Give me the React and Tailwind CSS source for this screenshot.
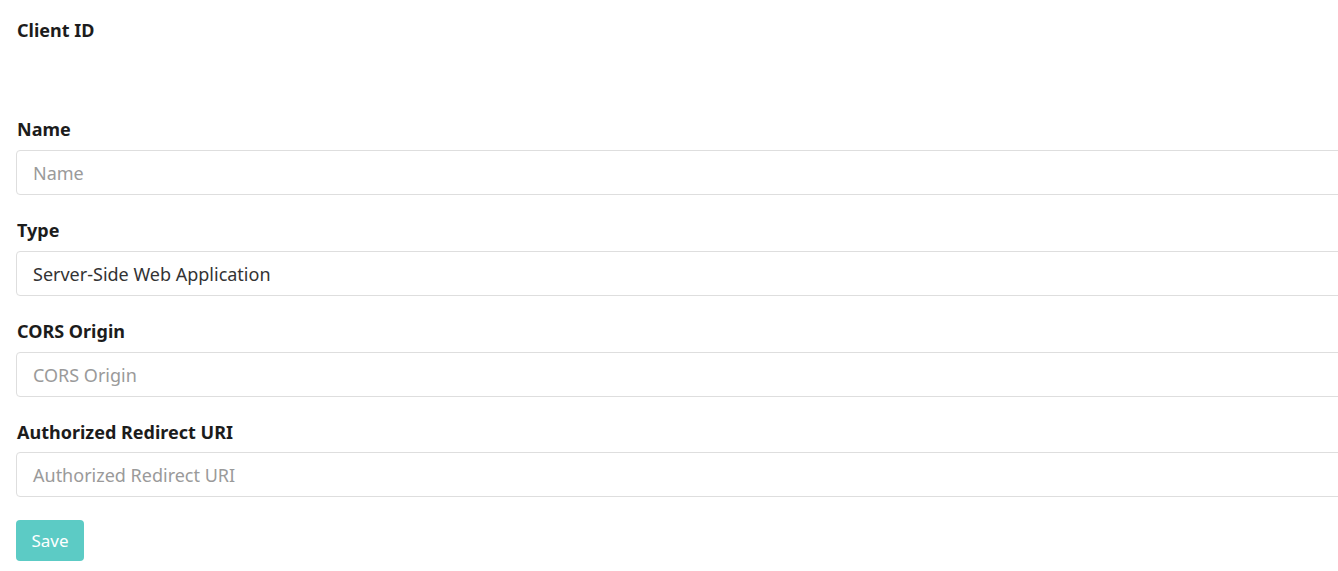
import React from "react";

function Field({ label, placeholder, value, last }) {
  return (
    <div className={last ? "mb-[23px]" : "mb-[23px]"}>
      <div className={"text-[18px] leading-[24px] font-bold text-[#1c1c1c] pl-[1px] " + (last ? "mb-[8px]" : "mb-[9px]")}>{label}</div>
      <div className="w-[1340px] h-[45px] border border-[#dedede] rounded-[4px] bg-white flex items-center pl-[16px] pt-[2px]">
        {value ? (
          <span className="text-[18px] text-[#333333]">{value}</span>
        ) : (
          <span className="text-[18px] text-[#9a9a9a]">{placeholder}</span>
        )}
      </div>
    </div>
  );
}

export default function App() {
  return (
    <div className="w-full h-[571px] overflow-hidden bg-white" style={{ fontFamily: '"Noto Sans", "Open Sans", sans-serif' }}>
      <div className="pl-[16px] pt-[18px]">
        <div className="text-[18px] leading-[24px] font-bold text-[#1c1c1c] pl-[1px] h-[99px]">Client ID</div>
        <Field label="Name" placeholder="Name" />
        <Field label="Type" value="Server-Side Web Application" />
        <Field label="CORS Origin" placeholder="CORS Origin" />
        <Field label="Authorized Redirect URI" placeholder="Authorized Redirect URI" last />
        <button className="w-[68px] h-[41px] rounded-[4px] bg-[#5ccbc5] text-white text-[17px]">Save</button>
      </div>
    </div>
  );
}
